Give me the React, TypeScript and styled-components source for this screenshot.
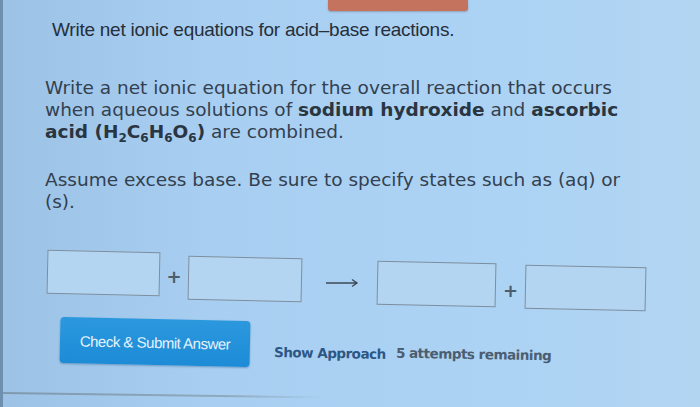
import * as React from "react";
import styled, { createGlobalStyle } from "styled-components";

const GlobalStyle = createGlobalStyle`
  html, body {
    margin: 0;
    padding: 0;
    background: #a9cff0;
  }
`;

const Page = styled.div`
  position: relative;
  width: 700px;
  height: 407px;
  overflow: hidden;
  background: linear-gradient(90deg, #9cc3e6 0%, #a8cff1 30%, #acd3f4 70%, #b2d5f2 100%);
  border-left: 3px solid #6f8fae;
  box-sizing: border-box;
  display: flex;
  flex-direction: column;
`;

const TopBar = styled.div`
  height: 11px;
  display: flex;
  padding-left: 325px;
`;

const Badge = styled.div`
  width: 140px;
  height: 11px;
  background: #c4735f;
  border-radius: 0 0 3px 3px;
  box-shadow: 0 1px 2px rgba(80, 40, 30, 0.3);
`;

const Content = styled.div`
  padding: 8px 0 0 42px;
  display: flex;
  flex-direction: column;
  color: #2c3846;
`;

const Title = styled.h1`
  margin: 0 0 0 7px;
  font-family: "Liberation Sans", Arial, sans-serif;
  font-weight: normal;
  font-size: 19px;
  letter-spacing: -0.25px;
  line-height: 22px;
  color: #262f3c;
`;

const Paragraph = styled.p<{ gap: number }>`
  margin: ${({ gap }) => gap}px 0 0 0;
  width: 580px;
  font-family: "DejaVu Sans", Verdana, sans-serif;
  font-size: 18.5px;
  line-height: 22px;
  color: #33404f;

  b {
    font-weight: bold;
    color: #2a3542;
  }
`;

const Sub = styled.span`
  display: inline-block;
  font-size: 12px;
  line-height: 12px;
  position: relative;
  top: 4px;
`;

const Equation = styled.div`
  margin-top: 38px;
  margin-left: 2px;
  display: flex;
  align-items: center;
`;

const AnswerBox = styled.div<{ drop: number; wide: number }>`
  width: ${({ wide }) => wide}px;
  height: 44px;
  border: 1.5px solid #7c8e9f;
  background: #b3d5f2;
  transform: translateY(${({ drop }) => drop}px) rotate(1.2deg);
  box-sizing: border-box;
`;

const Operator = styled.span<{ drop: number; wide: number }>`
  width: ${({ wide }) => wide}px;
  text-align: center;
  font-family: "DejaVu Sans", Verdana, sans-serif;
  font-size: 18px;
  font-weight: bold;
  color: #4e5d6c;
  transform: translateY(${({ drop }) => drop}px);
`;

const Arrow = styled.svg<{ drop: number }>`
  margin: 0 18px 0 23px;
  transform: translateY(${({ drop }) => drop}px);
`;

const Actions = styled.div`
  margin-top: 24px;
  margin-left: 15px;
  display: flex;
  align-items: center;
`;

const SubmitButton = styled.button`
  width: 190px;
  height: 46px;
  border: none;
  border-radius: 4px;
  background: linear-gradient(180deg, #2b98de 0%, #1d8bd6 100%);
  box-shadow: 0 1px 2px rgba(20, 60, 110, 0.35);
  color: #e6f3fd;
  font-family: "Liberation Sans", Arial, sans-serif;
  font-size: 15px;
  letter-spacing: -0.5px;
  transform: rotate(1.2deg);
`;

const LinkText = styled.span<{ drop: number; tone: string }>`
  font-family: "DejaVu Sans", Verdana, sans-serif;
  font-weight: bold;
  font-size: 13.5px;
  letter-spacing: -0.5px;
  color: ${({ tone }) => tone};
  transform: translateY(${({ drop }) => drop}px) rotate(1deg);
`;

const BottomEdge = styled.div`
  margin-top: auto;
  margin-bottom: 13px;
  height: 2px;
  width: 320px;
  background: linear-gradient(90deg, #7f98ad 0%, #8fa9bf 70%, rgba(143, 169, 191, 0) 100%);
  transform: rotate(0.8deg);
  transform-origin: left;
`;

export default function App() {
  return (
    <>
      <GlobalStyle />
      <Page>
        <TopBar>
          <Badge />
        </TopBar>
        <Content>
          <Title>Write net ionic equations for acid–base reactions.</Title>
          <Paragraph gap={36}>
            Write a net ionic equation for the overall reaction that occurs
            when aqueous solutions of <b>sodium hydroxide</b> and{" "}
            <b>
              ascorbic acid (H<Sub>2</Sub>C<Sub>6</Sub>H<Sub>6</Sub>O<Sub>6</Sub>)
            </b>{" "}
            are combined.
          </Paragraph>
          <Paragraph gap={26}>
            Assume excess base. Be sure to specify states such as (aq) or (s).
          </Paragraph>
          <Equation>
            <AnswerBox drop={0} wide={113} />
            <Operator drop={3} wide={28}>+</Operator>
            <AnswerBox drop={6} wide={114} />
            <Arrow drop={10} width="34" height="10" viewBox="0 0 34 10">
              <path d="M1 5 H32 M27 1.5 L32 5 L27 8.5" stroke="#3e4a57" strokeWidth="1.4" fill="none" />
            </Arrow>
            <AnswerBox drop={11} wide={119} />
            <Operator drop={17} wide={29}>+</Operator>
            <AnswerBox drop={15} wide={121} />
          </Equation>
          <Actions>
            <SubmitButton>Check &amp; Submit Answer</SubmitButton>
            <LinkText drop={11} tone="#2d5685" style={{ marginLeft: 24 }}>
              Show Approach
            </LinkText>
            <LinkText drop={12} tone="#4b5d70" style={{ marginLeft: 10 }}>
              5 attempts remaining
            </LinkText>
          </Actions>
        </Content>
        <BottomEdge />
      </Page>
    </>
  );
}
